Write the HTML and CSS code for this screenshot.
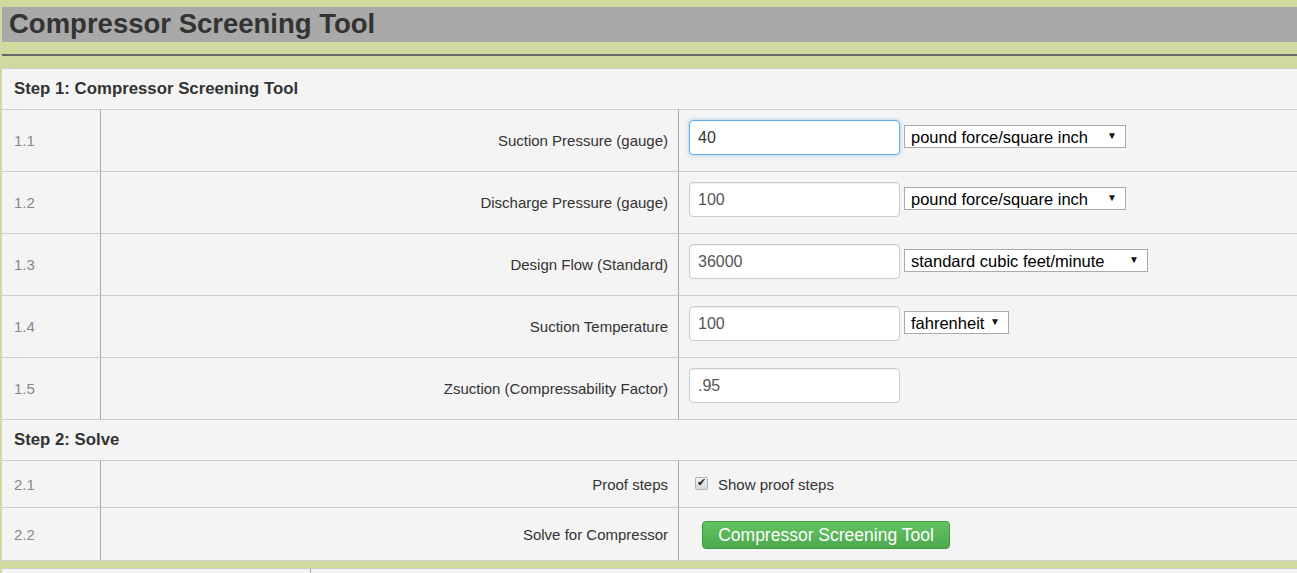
FILE: index.html
```html
<!DOCTYPE html>
<html lang="en">
<head>
  <meta charset="UTF-8" />
  <title>Compressor Screening Tool</title>
  <link rel="stylesheet" href="styles.css">
</head>
<body>
  <header class="titlebar">
    <h1>Compressor Screening Tool</h1>
  </header>
  <hr class="rule" />

  <div class="panel">
    <table class="steps">
      <tr class="step-head"><td colspan="3">Step 1: Compressor Screening Tool</td></tr>
      <tr class="row">
        <td class="num">1.1</td>
        <td class="label">Suction Pressure (gauge)</td>
        <td class="field">
          <div class="ctl">
            <input type="text" class="box focus" value="40" />
            <span class="unit w-psi"><select><option>pound force/square inch</option></select></span>
          </div>
        </td>
      </tr>
      <tr class="row">
        <td class="num">1.2</td>
        <td class="label">Discharge Pressure (gauge)</td>
        <td class="field">
          <div class="ctl">
            <input type="text" class="box" value="100" />
            <span class="unit w-psi"><select><option>pound force/square inch</option></select></span>
          </div>
        </td>
      </tr>
      <tr class="row">
        <td class="num">1.3</td>
        <td class="label">Design Flow (Standard)</td>
        <td class="field">
          <div class="ctl">
            <input type="text" class="box" value="36000" />
            <span class="unit w-flow"><select><option>standard cubic feet/minute</option></select></span>
          </div>
        </td>
      </tr>
      <tr class="row">
        <td class="num">1.4</td>
        <td class="label">Suction Temperature</td>
        <td class="field">
          <div class="ctl">
            <input type="text" class="box" value="100" />
            <span class="unit w-temp"><select><option>fahrenheit</option></select></span>
          </div>
        </td>
      </tr>
      <tr class="row">
        <td class="num">1.5</td>
        <td class="label">Zsuction (Compressability Factor)</td>
        <td class="field">
          <div class="ctl">
            <input type="text" class="box" value=".95" />
          </div>
        </td>
      </tr>
      <tr class="step-head"><td colspan="3">Step 2: Solve</td></tr>
      <tr class="row short">
        <td class="num">2.1</td>
        <td class="label">Proof steps</td>
        <td class="field">
          <label class="check"><input type="checkbox" checked /> Show proof steps</label>
        </td>
      </tr>
      <tr class="row solve">
        <td class="num">2.2</td>
        <td class="label">Solve for Compressor</td>
        <td class="field">
          <button class="btn-go">Compressor Screening Tool</button>
        </td>
      </tr>
    </table>
  </div>

  <div class="panel next">
    <div class="next-left"></div>
    <div class="next-right"></div>
  </div>
</body>
</html>
```

FILE: styles.css
```css
body {
  font-family: "Liberation Sans", Arial, sans-serif;
  margin: 0;
  padding: 7px 0 0 2px;
  background-color: #d2d99f;
  color: #333;
  font-size: 15px;
}
.titlebar {
  background-color: #a9a9a9;
  height: 35px;
}
.titlebar h1 {
  margin: 0;
  padding-left: 7px;
  font-size: 27.5px;
  line-height: 34px;
  color: #333;
}
.rule {
  margin: 12px 0 12px 0;
  border: none;
  height: 2px;
  background-color: #666;
}
.panel {
  background-color: #f4f4f4;
  border-top: 1px solid #ccc;
}
.steps {
  width: 100%;
  border-collapse: collapse;
}
.steps td {
  padding: 0;
}
.step-head td {
  height: 40px;
  padding-left: 12px;
  font-weight: bold;
  font-size: 16.8px;
  border-bottom: 1px solid #ccc;
  vertical-align: middle;
}
.row td {
  height: 61px;
  border-bottom: 1px solid #ccc;
  vertical-align: middle;
}
.row.short td {
  height: 46px;
}
.row.solve td {
  height: 52px;
}
.num {
  width: 86px;
  padding-left: 12px !important;
  color: #888;
  border-right: 1px solid #aaa;
}
.label {
  text-align: right;
  padding-right: 10px !important;
  width: 567px;
  border-right: 1px solid #aaa;
}
.field {
  padding-left: 10px !important;
}
.ctl {
  display: flex;
  align-items: flex-start;
  gap: 4px;
  margin-top: -6px;
}
.box {
  width: 211px;
  height: 35px;
  box-sizing: border-box;
  padding: 6px 8px;
  font-family: "Liberation Sans", Arial, sans-serif;
  font-size: 16px;
  color: #555;
  border: 1px solid #ccc;
  border-radius: 4px;
  background: #fff;
  box-shadow: inset 0 1px 1px rgba(0,0,0,0.075);
}
.box.focus {
  border-color: #66afe9;
  box-shadow: inset 0 1px 1px rgba(0,0,0,0.075), 0 0 4px rgba(102,175,233,0.6);
  color: #333;
}
.unit {
  position: relative;
  display: inline-block;
  margin-top: 5px;
  height: 23px;
}
.unit select {
  appearance: none;
  -webkit-appearance: none;
  width: 100%;
  height: 23px;
  padding: 0 0 0 6px;
  font-family: "Liberation Sans", Arial, sans-serif;
  font-size: 16.5px;
  color: #000;
  background: #fff;
  border: 1px solid #aaa;
  border-radius: 0;
}
.unit::after {
  content: "\25BC";
  position: absolute;
  right: 9px;
  top: 5px;
  font-size: 10px;
  color: #111;
  pointer-events: none;
}
.w-psi { width: 222px; }
.w-flow { width: 244px; }
.w-temp { width: 105px; }
.check {
  display: inline-flex;
  align-items: center;
  gap: 10px;
  margin-left: 6px;
  padding-top: 2px;
}
.check input {
  appearance: none;
  -webkit-appearance: none;
  margin: 0;
  width: 13px;
  height: 13px;
  border: 1px solid #b5b5b5;
  border-radius: 2px;
  background: linear-gradient(#f2f2f2, #d8d8d8);
  position: relative;
  top: -1px;
}
.check input:checked::after {
  content: "\2714";
  position: absolute;
  left: 1px;
  top: -2px;
  font-size: 11px;
  color: #222;
}
.btn-go {
  margin-left: 13px;
  margin-top: 2px;
  width: 248px;
  height: 28px;
  font-family: "Liberation Sans", Arial, sans-serif;
  font-size: 17.5px;
  color: #fff;
  background: linear-gradient(#62c462, #4ea84e);
  border: 1px solid #3e9a3e;
  border-radius: 4px;
  cursor: pointer;
}
.panel.next {
  margin-top: 7px;
  display: flex;
  height: 20px;
}
.next-left {
  width: 308px;
  border-right: 1px solid #aaa;
}
```
